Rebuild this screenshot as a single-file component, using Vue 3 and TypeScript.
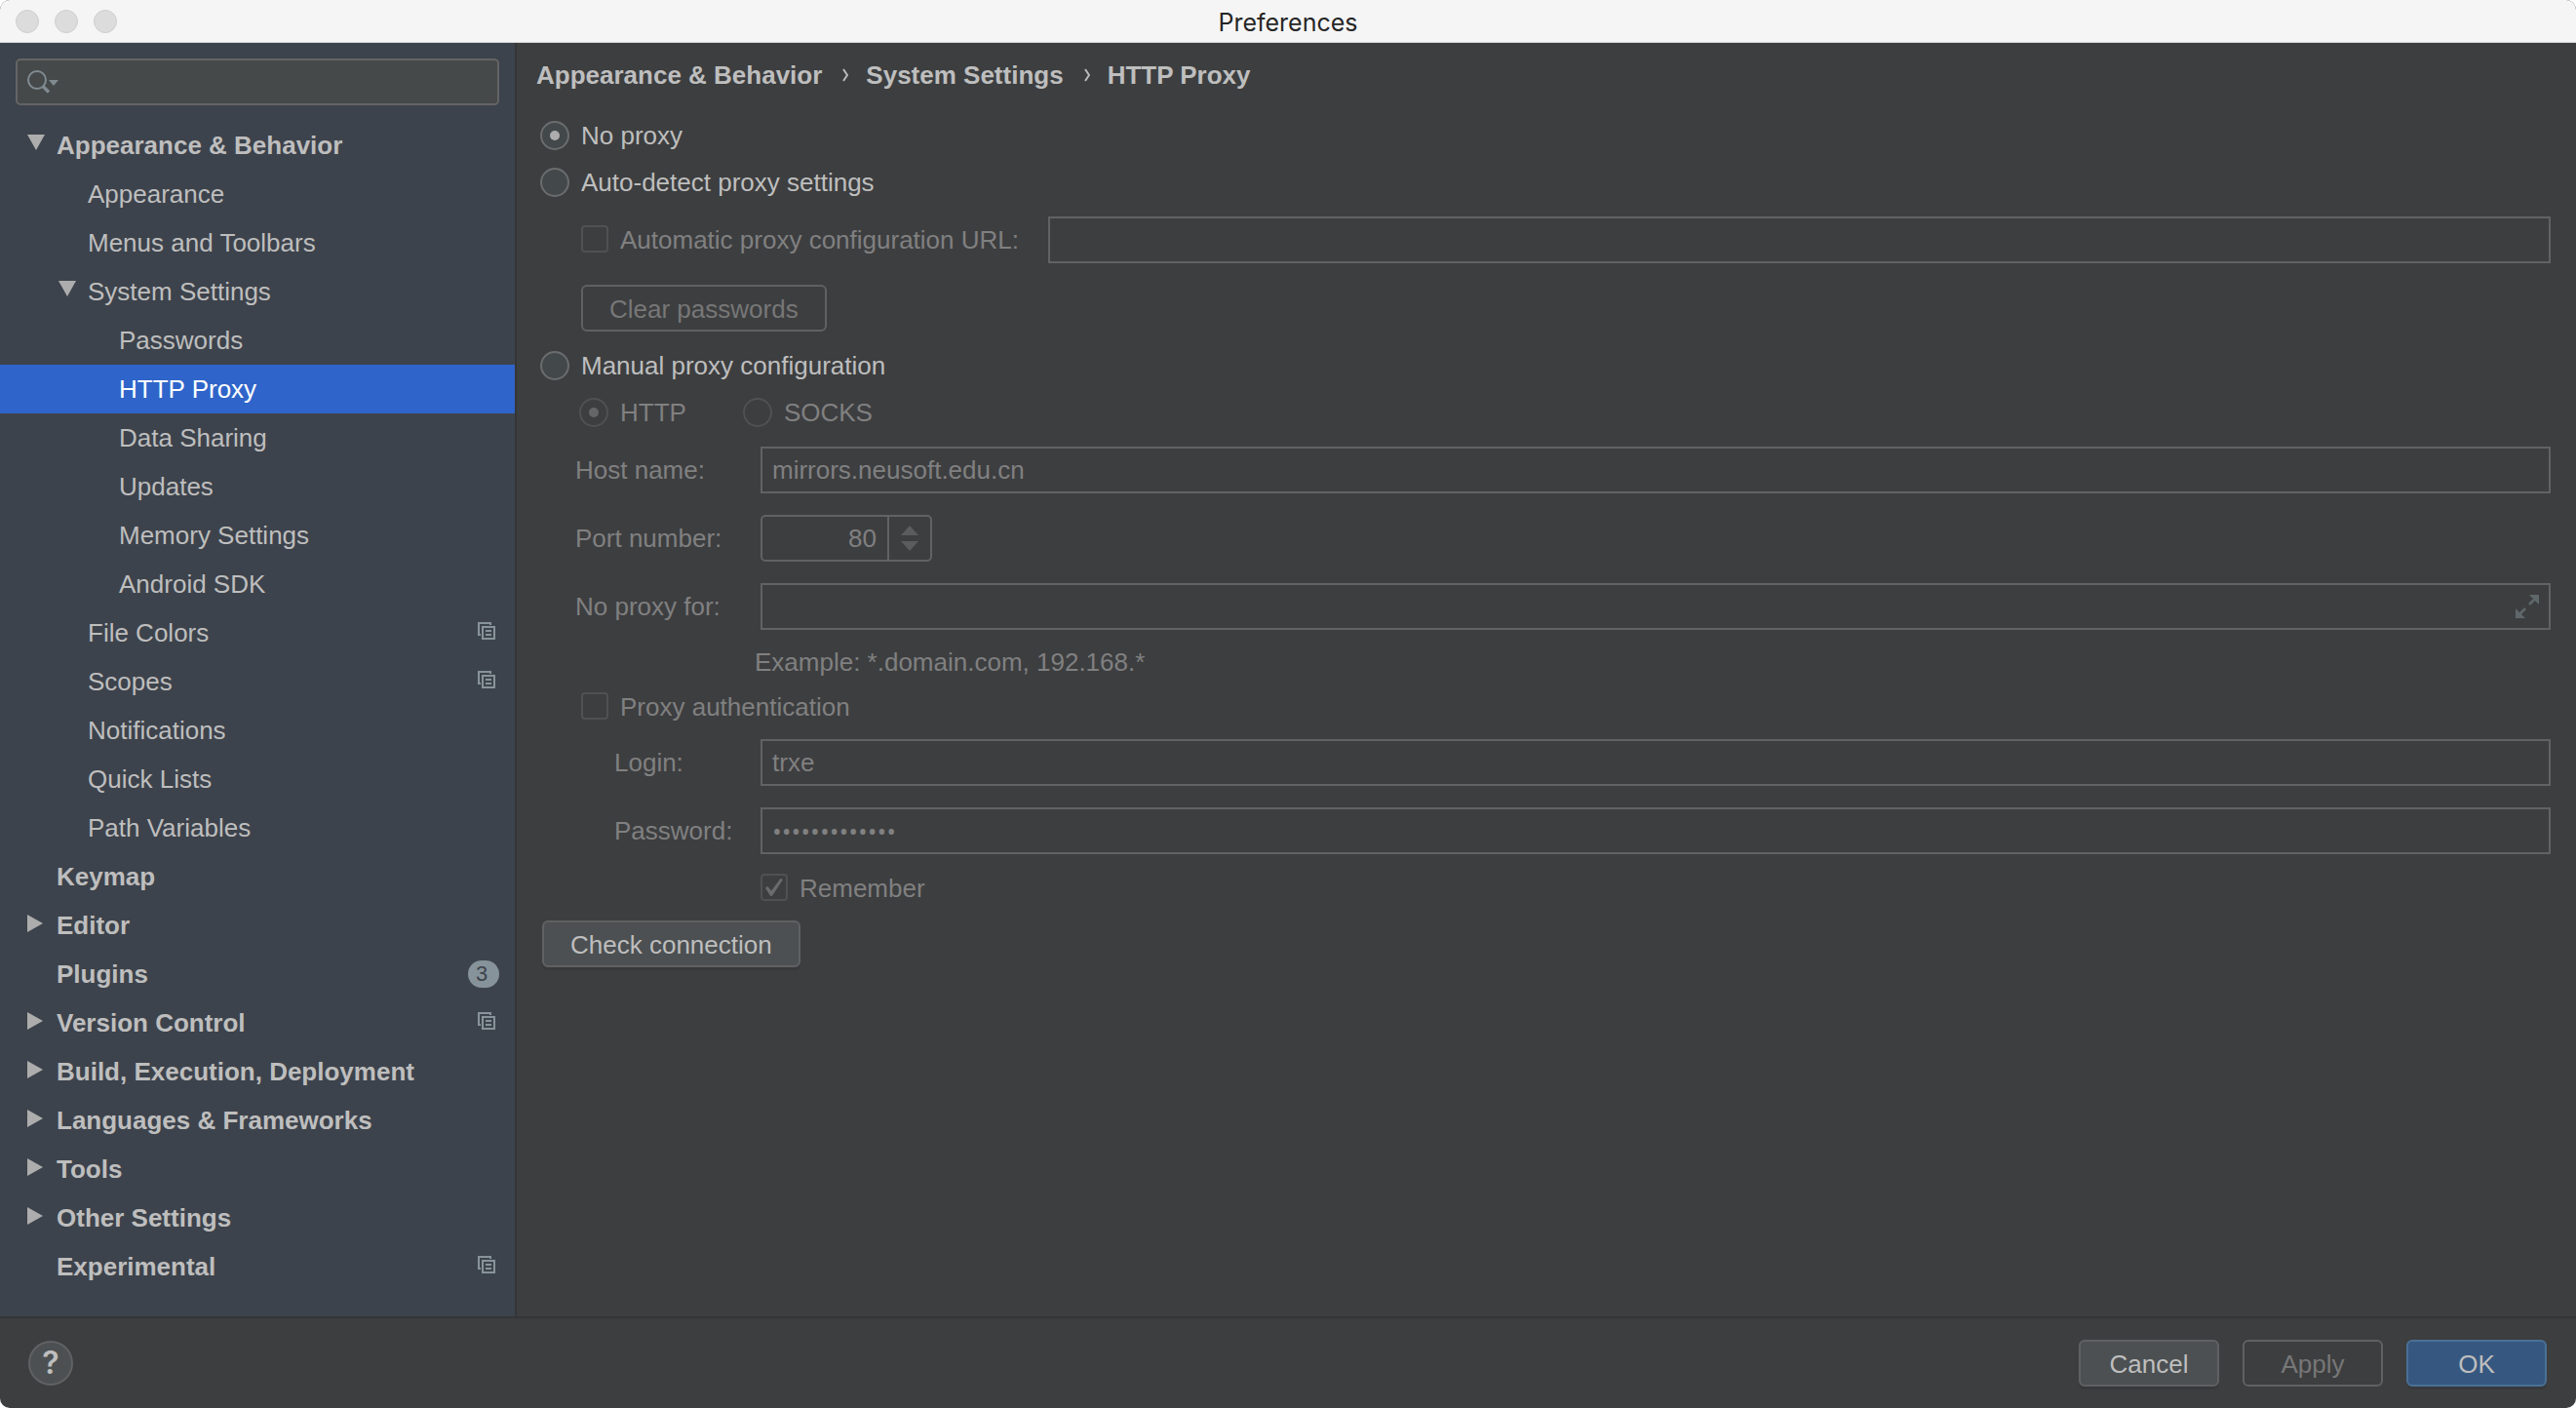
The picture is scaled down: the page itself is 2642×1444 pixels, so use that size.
<script setup lang="ts">
import { ref } from 'vue'

interface TreeItem {
  label: string
  level: 0 | 1 | 2
  arrow?: 'open' | 'closed'
  scoped?: boolean
  count?: number
}

const items: TreeItem[] = [
  { label: 'Appearance & Behavior', level: 0, arrow: 'open' },
  { label: 'Appearance', level: 1 },
  { label: 'Menus and Toolbars', level: 1 },
  { label: 'System Settings', level: 1, arrow: 'open' },
  { label: 'Passwords', level: 2 },
  { label: 'HTTP Proxy', level: 2 },
  { label: 'Data Sharing', level: 2 },
  { label: 'Updates', level: 2 },
  { label: 'Memory Settings', level: 2 },
  { label: 'Android SDK', level: 2 },
  { label: 'File Colors', level: 1, scoped: true },
  { label: 'Scopes', level: 1, scoped: true },
  { label: 'Notifications', level: 1 },
  { label: 'Quick Lists', level: 1 },
  { label: 'Path Variables', level: 1 },
  { label: 'Keymap', level: 0 },
  { label: 'Editor', level: 0, arrow: 'closed' },
  { label: 'Plugins', level: 0, count: 3 },
  { label: 'Version Control', level: 0, arrow: 'closed', scoped: true },
  { label: 'Build, Execution, Deployment', level: 0, arrow: 'closed' },
  { label: 'Languages & Frameworks', level: 0, arrow: 'closed' },
  { label: 'Tools', level: 0, arrow: 'closed' },
  { label: 'Other Settings', level: 0, arrow: 'closed' },
  { label: 'Experimental', level: 0, scoped: true },
]

const crumbs = ['Appearance & Behavior', 'System Settings', 'HTTP Proxy']

const selected = ref('HTTP Proxy')
const search = ref('')
const mode = ref('none')
const proxyType = ref('http')
const host = ref('mirrors.neusoft.edu.cn')
const port = ref('80')
const noProxyFor = ref('')
const pacUrl = ref('')
const login = ref('trxe')
const password = ref('proxypassword')
const usePac = ref(false)
const useAuth = ref(false)
const remember = ref(true)
</script>

<template>
  <div class="window">
    <header class="titlebar">
      <div class="lights"><i></i><i></i><i></i></div>
      <h1>Preferences</h1>
    </header>

    <div class="body">
      <aside class="sidebar">
        <label class="search">
          <svg width="34" height="26" viewBox="1 0 34 26" aria-hidden="true">
            <circle cx="11" cy="11" r="9" fill="none" stroke="#7f8b91" stroke-width="2" />
            <path d="M17 17.5L23 23.5" stroke="#7f8b91" stroke-width="3.4" />
            <path d="M23 11H33L28 17Z" fill="#7f8b91" />
          </svg>
          <input v-model="search" type="text" aria-label="Search settings" />
        </label>
        <nav>
          <ul class="tree">
            <li v-for="item in items" :key="item.label">
              <button
                type="button"
                class="node"
                :class="['level-' + item.level, { selected: item.label === selected }]"
                @click="selected = item.label"
              >
                <span class="arrow">
                  <svg v-if="item.arrow === 'open'" width="18" height="18" viewBox="0 0 18 18">
                    <path d="M0 0H18L9 16Z" fill="#adadad" />
                  </svg>
                  <svg v-else-if="item.arrow === 'closed'" width="16" height="18" viewBox="0 0 16 18">
                    <path d="M0 0L16 9L0 18Z" fill="#adadad" />
                  </svg>
                </span>
                <span class="text">{{ item.label }}</span>
                <svg v-if="item.scoped" class="scope" width="18" height="18" viewBox="0 0 18 18">
                  <path
                    d="M3 13H1V1H13V3M5 5H17V17H5ZM8 9H14M8 13H14"
                    fill="none"
                    stroke="#87939a"
                    stroke-width="2"
                  />
                </svg>
                <span v-if="item.count" class="badge">{{ item.count }}</span>
              </button>
            </li>
          </ul>
        </nav>
      </aside>

      <main class="content">
        <nav class="crumbs" aria-label="Breadcrumb">
          <template v-for="(crumb, i) in crumbs" :key="crumb">
            <svg v-if="i" width="6" height="14" viewBox="0 0 6 14" aria-hidden="true">
              <path d="M1 1L5 7L1 13" fill="none" stroke="#bbbbbb" stroke-width="2" />
            </svg>
            <span>{{ crumb }}</span>
          </template>
        </nav>

        <form @submit.prevent>
          <label class="option"><input v-model="mode" type="radio" name="mode" value="none" />No proxy</label>
          <label class="option tight"><input v-model="mode" type="radio" name="mode" value="auto" />Auto-detect proxy settings</label>

          <div class="pac">
            <label class="option off"><input v-model="usePac" type="checkbox" disabled />Automatic proxy configuration URL:</label>
            <input v-model="pacUrl" class="field" type="text" aria-label="Proxy configuration URL" disabled />
          </div>
          <button class="btn clear" type="button" disabled>Clear passwords</button>

          <label class="option manual"><input v-model="mode" type="radio" name="mode" value="manual" />Manual proxy configuration</label>
          <div class="types">
            <label class="option off"><input v-model="proxyType" type="radio" name="type" value="http" disabled />HTTP</label>
            <label class="option off"><input v-model="proxyType" type="radio" name="type" value="socks" disabled />SOCKS</label>
          </div>

          <div class="fields">
            <div class="row">
              <label for="host">Host name:</label>
              <input id="host" v-model="host" class="field" type="text" disabled />
            </div>
            <div class="row">
              <label for="port">Port number:</label>
              <div class="spinner">
                <input id="port" v-model="port" type="text" inputmode="numeric" disabled />
                <div class="steps">
                  <button type="button" aria-label="Increase" disabled>
                    <svg width="18" height="10" viewBox="0 0 18 10"><path d="M0 10L9 0L18 10Z" fill="#5b5c5d" /></svg>
                  </button>
                  <button type="button" aria-label="Decrease" disabled>
                    <svg width="18" height="10" viewBox="0 0 18 10"><path d="M0 0H18L9 10Z" fill="#5b5c5d" /></svg>
                  </button>
                </div>
              </div>
            </div>
            <div class="row">
              <label for="noproxy">No proxy for:</label>
              <div class="field expandable">
                <input id="noproxy" v-model="noProxyFor" type="text" disabled />
                <button type="button" aria-label="Expand" disabled>
                  <svg width="24" height="24" viewBox="0 0 24 24">
                    <path d="M14 0H24V10ZM0 14V24H10Z" fill="#5f676b" />
                    <path d="M20 4L14 10M4 20L10 14" stroke="#5f676b" stroke-width="2.6" />
                  </svg>
                </button>
              </div>
            </div>
          </div>
          <p class="example">Example: *.domain.com, 192.168.*</p>

          <label class="option off auth"><input v-model="useAuth" type="checkbox" disabled />Proxy authentication</label>
          <div class="fields credentials">
            <div class="row">
              <label for="login">Login:</label>
              <input id="login" v-model="login" class="field" type="text" disabled />
            </div>
            <div class="row">
              <label for="password">Password:</label>
              <input id="password" v-model="password" class="field" type="password" autocomplete="off" disabled />
            </div>
          </div>
          <label class="option off remember"><input v-model="remember" type="checkbox" disabled />Remember</label>

          <button class="btn raised check" type="button">Check connection</button>
        </form>
      </main>
    </div>

    <footer class="footer">
      <button class="help" type="button" aria-label="Help">?</button>
      <div class="actions">
        <button class="btn raised" type="button">Cancel</button>
        <button class="btn" type="button" disabled>Apply</button>
        <button class="btn raised primary" type="button">OK</button>
      </div>
    </footer>
  </div>
</template>

<style>
body {
  background: #ffffff;
}
</style>

<style scoped>
.window {
  display: flex;
  flex-direction: column;
  min-height: 100vh;
  overflow: hidden;
  border-radius: 10px;
  background: #3d3e40;
  color: #bebebe;
  font: 26px/30px "Liberation Sans", Arial, sans-serif;
}
.window *,
.window {
  box-sizing: border-box;
}
button,
input {
  margin: 0;
  padding: 0;
  border: 0;
  background: none;
  color: inherit;
  font: inherit;
}
svg {
  display: block;
  flex: none;
}

.titlebar {
  display: grid;
  grid-template-columns: 1fr auto 1fr;
  align-items: center;
  height: 44px;
  padding: 0 16px;
  border-bottom: 1px solid #d3d5d6;
  background: #f5f5f5;
}
.titlebar h1 {
  margin: 0;
  padding-top: 2px;
  color: #262626;
  font: 400 25px/30px Inter, "Liberation Sans", sans-serif;
}
.lights {
  display: flex;
  gap: 16px;
}
.lights i {
  width: 24px;
  height: 24px;
  border: 1px solid #cecece;
  border-radius: 50%;
  background: #dcdcdc;
}

.body {
  display: flex;
  flex: 1;
}
.sidebar {
  flex: none;
  width: 530px;
  border-right: 2px solid #343537;
  background: #3d434c;
}
.search {
  display: flex;
  align-items: center;
  height: 48px;
  margin: 16px;
  padding: 0 10px;
  border: 2px solid #646464;
  border-radius: 5px;
  background: #45494a;
}
.search input {
  flex: 1;
  min-width: 0;
  outline: 0;
}
.tree {
  margin: 0;
  padding: 0;
  list-style: none;
}
.node {
  display: flex;
  align-items: center;
  width: 100%;
  height: 50px;
  padding-right: 16px;
  text-align: left;
  line-height: 50px;
}
.level-0 {
  padding-left: 28px;
  font-weight: 700;
}
.level-1 {
  padding-left: 60px;
}
.level-2 {
  padding-left: 92px;
}
.selected {
  background: #2f65ca;
  color: #ffffff;
}
.arrow {
  flex: none;
  width: 30px;
  padding-bottom: 4px;
}
.text {
  flex: 1;
  white-space: nowrap;
}
.scope {
  margin: 0 4px 4px 0;
}
.badge {
  width: 32px;
  height: 28px;
  padding-left: 8px;
  border-radius: 14px;
  background: #87939a;
  color: #3d434c;
  font-size: 22px;
  font-weight: 400;
  line-height: 28px;
}

.content {
  flex: 1;
  min-width: 0;
  padding: 18px 26px 32px 20px;
}
.crumbs {
  display: flex;
  align-items: center;
  font-weight: 700;
}
.crumbs svg {
  margin: 0 18px 0 21px;
}
form {
  display: flex;
  flex-direction: column;
  align-items: flex-start;
  margin-top: 32px;
  padding-left: 4px;
}
.option {
  display: flex;
  align-items: flex-start;
  gap: 12px;
  white-space: nowrap;
}
.off,
.row,
.example {
  color: #808080;
}
.option input {
  display: grid;
  flex: none;
  place-items: center;
  width: 30px;
  height: 30px;
  border: 2px solid #6b6c6d;
  border-radius: 50%;
  background: #43494a;
  appearance: none;
}
.option input[type="checkbox"] {
  width: 28px;
  height: 28px;
  border-radius: 4px;
}
.option input:disabled {
  border-color: #505152;
  background: none;
}
.option input[type="radio"]:checked::before {
  width: 10px;
  height: 10px;
  border-radius: 50%;
  background: #adadad;
  content: "";
}
.option input[type="radio"]:disabled:checked::before {
  background: #656667;
}
.option input[type="checkbox"]:checked::before {
  width: 18px;
  height: 18px;
  background: #6a6b6c;
  clip-path: polygon(0 54%, 12% 44%, 34% 70%, 86% 0, 100% 6%, 38% 100%, 28% 98%);
  content: "";
}
.tight {
  margin-top: 18px;
}
.pac {
  display: flex;
  align-items: center;
  align-self: stretch;
  gap: 30px;
  margin: 20px 0 22px;
  padding-left: 42px;
}
.field {
  flex: 1;
  min-width: 0;
  height: 48px;
  padding: 0 10px;
  border: 2px solid #616263;
}
.field,
.field input {
  color: #808080;
}
.clear {
  margin-left: 42px;
}
.manual {
  margin-top: 20px;
}
.types {
  display: flex;
  gap: 58px;
  margin: 18px 0 20px;
  padding-left: 40px;
}
.fields {
  display: flex;
  flex-direction: column;
  align-self: stretch;
  gap: 22px;
  padding-left: 36px;
}
.row {
  display: flex;
  align-items: center;
}
.row > label {
  flex: none;
  width: 190px;
}
.spinner {
  display: flex;
  width: 176px;
  height: 48px;
  border: 2px solid #616263;
  border-radius: 5px;
}
.spinner input {
  flex: 1;
  min-width: 0;
  padding-right: 11px;
  text-align: right;
}
.steps {
  display: flex;
  flex-direction: column;
  align-items: center;
  justify-content: center;
  gap: 6px;
  width: 44px;
  border-left: 2px solid #616263;
}
.expandable {
  display: flex;
  align-items: center;
}
.expandable input {
  flex: 1;
  min-width: 0;
}
.example {
  margin: 18px 0 16px;
  padding-left: 220px;
}
.auth {
  margin: 0 0 18px 42px;
}
.credentials .row > label {
  padding-left: 40px;
}
#password {
  font-family: "Open Sans", sans-serif;
}
.remember {
  margin: 20px 0 18px 226px;
}

.btn {
  min-width: 144px;
  height: 48px;
  padding: 2px 27px 0;
  border: 2px solid #5f6162;
  border-radius: 6px;
}
.btn:disabled {
  color: #777777;
}
.raised {
  background: #4c5052;
  box-shadow: 0 3px 0 #38393b;
}
.check {
  margin-left: 2px;
}
.primary {
  border-color: #4a7096;
  background: #365880;
}

.footer {
  display: flex;
  align-items: center;
  justify-content: space-between;
  height: 94px;
  padding: 0 30px 0 29px;
  border-top: 2px solid #333436;
}
.help {
  width: 46px;
  height: 46px;
  border: 2px solid #5f6162;
  border-radius: 50%;
  background: #4c5052;
  font: 600 32px/42px Inter, "Liberation Sans", sans-serif;
}
.actions {
  display: flex;
  gap: 24px;
}
</style>
